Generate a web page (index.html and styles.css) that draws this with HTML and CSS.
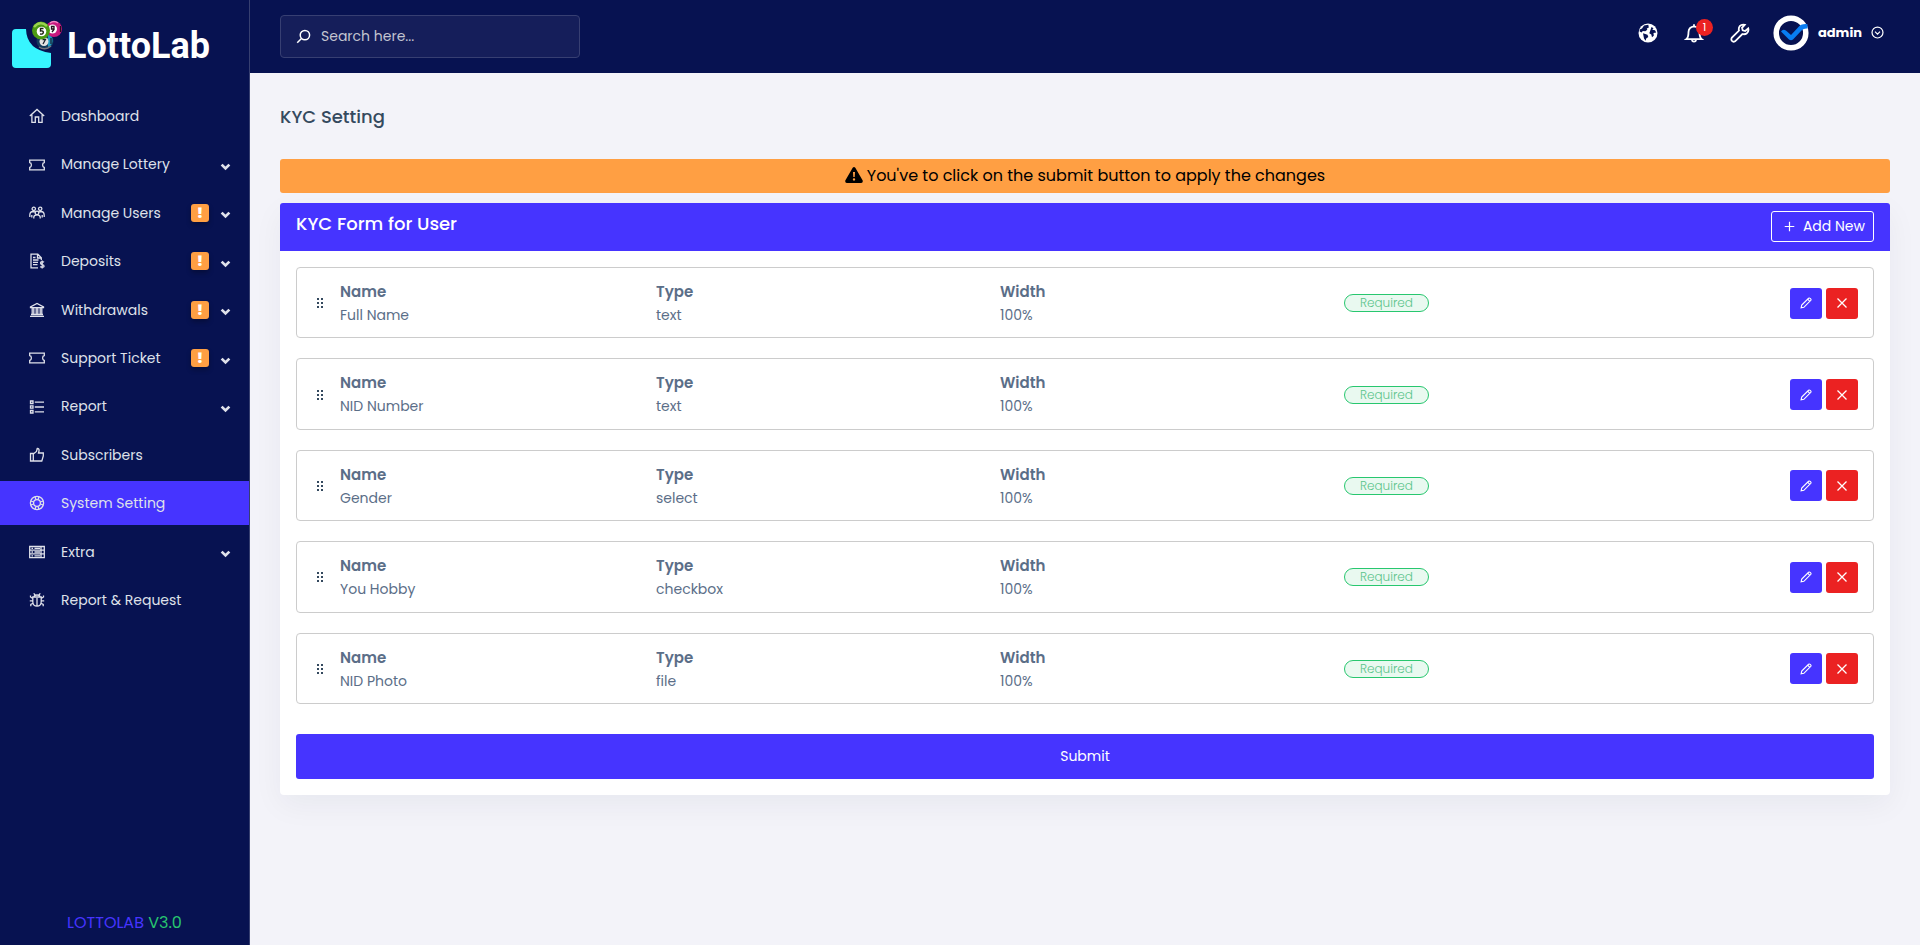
FILE: index.html
```html
<!DOCTYPE html>
<html lang="en">
<head>
<meta charset="utf-8">
<meta name="viewport" content="width=device-width, initial-scale=1">
<title>LottoLab - KYC Setting</title>
<link rel="stylesheet" href="styles.css">
</head>
<body>
<svg class="sprite" aria-hidden="true">
  <symbol id="i-home" viewBox="0 0 16 16"><path d="M.8 8 8 1.4 15.200 8M2.900 6.800V14.300H6.300V9H9.700V14.300H13.100V6.800"/></symbol>
  <symbol id="i-ticket" viewBox="0 0 16 16"><path d="M.7 3.200H15.300V5.500Q13.600 5.900 13.600 8T15.300 10.500V12.800H.7V10.500Q2.400 10.100 2.400 8T.7 5.500Z"/></symbol>
  <symbol id="i-users" viewBox="0 0 16 16"><circle cx="4.800" cy="3.800" r="1.700"/><circle cx="11.200" cy="3.800" r="1.700"/><circle cx="8" cy="7.900" r="1.800"/><path d="M4.800 13.500V12Q5 9.900 8 9.900T11.200 12V13.500M.8 12V10Q1 6.500 4 6.500L6 7M15.200 12V10Q15 6.500 12 6.500L10 7M2.800 12.500V10M13.200 12.500V10"/></symbol>
  <symbol id="i-invoice" viewBox="0 0 16 16"><path d="M9 14.800H2V1.200H8.800L12.300 4.700V7M8.500 1.200V5H12.300M4 4.500H6.500M4 7H9.500M4 9.300H9M4 11.600H8.500M15 9.300Q14.300 8.600 13.200 8.600 11.500 8.700 11.500 10T13.200 11.500 15 13T13.200 14.300Q12 14.300 11.300 13.500M13.200 7.600V15.400"/></symbol>
  <symbol id="i-bank" viewBox="0 0 16 16"><path d="M1.500 5.600V4.800L8 1.500 14.500 4.800V5.600ZM3.200 6V12.300M4.800 6V12.300M7.200 6V12.300M8.800 6V12.300M11.200 6V12.300M12.800 6V12.300M2 12.500H14M1 14.400H15"/></symbol>
  <symbol id="i-list" viewBox="0 0 16 16"><path d="M1.500 2H4V4.500H1.500ZM1.500 6.800H4V9.200H1.500ZM1.500 11.500H4V14H1.500ZM5.800 3.200H15M5.800 8H15M5.800 12.800H15"/></symbol>
  <symbol id="i-thumb" viewBox="0 0 16 16"><path d="M1.500 6.500H4.300V14H1.500ZM4.300 7 7.500 4.500 8.200 1.500Q10.500 1.300 10 4L9.500 6H14.300V9L12.800 14H4.300"/></symbol>
  <symbol id="i-ring" viewBox="0 0 16 16"><circle cx="8" cy="8" r="6.600"/><circle cx="8" cy="8" r="3.400"/><path d="M6 1.800 7 4.600M10 1.800 9 4.600M6 14.200 7 11.400M10 14.200 9 11.400M1.800 6 4.600 7M1.800 10 4.600 9M14.200 6 11.400 7M14.200 10 11.400 9"/></symbol>
  <symbol id="i-grid" viewBox="0 0 16 16"><path d="M.7 2.500H15.300V13.700H.7ZM.7 6.200H15.300M.7 9.900H15.300M2.500 4.400H4M5.500 4.400H11M2.500 8H4M5.500 8H11M2.500 11.800H4M5.500 11.800H11M12 2.500V13.700"/></symbol>
  <symbol id="i-bug" viewBox="0 0 16 16"><path d="M3.800 5H12.200V10Q12 14.200 8 14.200T3.800 10ZM5 5Q5.200 3 8 3T11 5M4.800 1.200 6 3.300M11.200 1.200 10 3.300M8 6V14M3.800 6.500 1.500 5V3.500M12.200 6.500 14.500 5V3.500M.8 8.800H3.800M12.200 8.800H15.200M4 11.300 1.800 12.500V14.300M12 11.300 14.200 12.500V14.300"/></symbol>
  <symbol id="i-chevron" viewBox="0 0 10 10"><path d="M1.500 3.300 5 6.700 8.500 3.300"/></symbol>
  <symbol id="i-search" viewBox="0 0 16 16"><circle cx="9.500" cy="6.500" r="5"/><path d="M5.800 10.200 1.300 14.700"/></symbol>
  <symbol id="i-globe" viewBox="0 0 20 20"><circle cx="10" cy="10" r="9.500" fill="currentColor" stroke="none"/><path d="M6 2.500 10.300 1.800 10.800 4.500 8.800 5.600 9.300 6.800 7.300 8.300 4.800 8 3.500 9.600 1.700 8.500 1.800 6.500 4 5.500ZM13.500 4 15.500 5.300 14.300 6.800 17 7.200 18.200 9.500 15.500 10 15.800 12.800 14 14.300 13.300 11.500 11.300 10.300 12.200 7.800ZM5 10.300 9.500 11.700 10.300 14 8.200 15.400 7.700 17.800 6 15.500Z" class="globe-land"/></symbol>
  <symbol id="i-bell" viewBox="0 0 20 20"><path d="M2.300 16.200Q4.500 14.500 4.500 9 4.700 4 10 3.300 15.300 4 15.500 9 15.500 14.500 17.700 16.200ZM10 1.200V3.300M8 16.500Q8 18.600 10 18.600T12 16.500"/></symbol>
  <symbol id="i-wrench" viewBox="0 0 20 20"><path d="M18.200 5.400 15.200 8 12.700 7.300 12 4.800 14.800 1.800Q11.800.9 9.700 3.200 8.300 5 9 7.600L1.700 14.900Q.8 16.700 2 18T5.100 18.300L12.400 11Q15 11.700 16.900 10.200 19.100 8 18.200 5.400Z"/></symbol>
  <symbol id="i-circle-down" viewBox="0 0 14 14"><circle cx="7" cy="7" r="5.900"/><path d="M4.300 6 7 8.700 9.700 6"/></symbol>
  <symbol id="i-warning" viewBox="0 0 18 16"><path d="M7.700.8Q9-.7 10.300.8L17.700 13.500Q18.200 15.800 16.200 16H1.800Q-.2 15.800.3 13.500ZM8 5 8.300 10H9.700L10 5ZM9 11.200A1.200 1.200 0 1 0 9 13.600 1.200 1.200 0 1 0 9 11.200Z" fill="currentColor" fill-rule="evenodd" stroke="none"/></symbol>
  <symbol id="i-plus" viewBox="0 0 12 12"><path d="M6 .8V11.200M.8 6H11.200"/></symbol>
  <symbol id="i-grip" viewBox="0 0 8 12"><path d="M1 1H3V3H1ZM5 1H7V3H5ZM1 5H3V7H1ZM5 5H7V7H5ZM1 9H3V11H1ZM5 9H7V11H5Z" fill="currentColor" stroke="none"/></symbol>
  <symbol id="i-pen" viewBox="0 0 14 14"><path d="M1.300 12.700 2 9.500 10 1.500Q11 .8 12.200 1.900T12.500 4L4.500 12ZM8.900 2.600 11.400 5.100"/></symbol>
  <symbol id="i-times" viewBox="0 0 12 12"><path d="M1.500 1.500 10.500 10.500M10.500 1.500 1.500 10.500"/></symbol>
</svg>

<div class="layout">
  <aside class="sidebar">
    <a class="logo" href="#">
      <svg class="logo-mark" viewBox="0 0 52 50" aria-hidden="true">
        <path d="M4 10H14Q14.500 31 39 34V45Q39 49 35 49H4Q0 49 0 45V14Q0 10 4 10Z" fill="#37f5ff"/>
        <circle cx="33" cy="22" r="8.500" fill="#123a5c"/><path d="M36 15Q41 17 40.500 22T36 28Z" fill="#1d9cc4"/><circle cx="32" cy="22.500" r="4.500" fill="#e4e4e4"/><path d="M27 28Q33 32 39 27" fill="none" stroke="#77757c" stroke-width="1.500"/><path d="M30.500 20.500H33.500L31 25M39 19V25" fill="none" stroke="#1c2330" stroke-width="1.300"/>
        <circle cx="42" cy="10" r="8" fill="#c9187f"/><path d="M38 4Q42 1 46 4" fill="none" stroke="#f08bc5" stroke-width="1.500"/><circle cx="40.500" cy="10" r="4.500" fill="#fff"/><path d="M42 10H39.500V7.500H42V10.500L40 13M48.500 7V13" fill="none" stroke="#26121d" stroke-width="1.300"/>
        <circle cx="29" cy="11.500" r="9" fill="#4b9a12"/><path d="M22 8Q28 1 35 7" fill="none" stroke="#9bd44f" stroke-width="2.500"/><circle cx="29.500" cy="12.500" r="4.800" fill="#fff"/><path d="M31.500 9.500H28.500V12Q31.500 11.500 31.300 13.500T28 15" fill="none" stroke="#1a2312" stroke-width="1.400"/>
      </svg>
      <span class="logo-text">LottoLab</span>
    </a>
    <nav>
      <ul class="menu">
        <li><a class="menu-link" href="#"><svg class="icon"><use href="#i-home"/></svg><span class="menu-title">Dashboard</span></a></li>
        <li><a class="menu-link" href="#"><svg class="icon"><use href="#i-ticket"/></svg><span class="menu-title">Manage Lottery</span><svg class="chevron"><use href="#i-chevron"/></svg></a></li>
        <li><a class="menu-link" href="#"><svg class="icon"><use href="#i-users"/></svg><span class="menu-title">Manage Users</span><span class="alert-mark">!</span><svg class="chevron"><use href="#i-chevron"/></svg></a></li>
        <li><a class="menu-link" href="#"><svg class="icon"><use href="#i-invoice"/></svg><span class="menu-title">Deposits</span><span class="alert-mark">!</span><svg class="chevron"><use href="#i-chevron"/></svg></a></li>
        <li><a class="menu-link" href="#"><svg class="icon"><use href="#i-bank"/></svg><span class="menu-title">Withdrawals</span><span class="alert-mark">!</span><svg class="chevron"><use href="#i-chevron"/></svg></a></li>
        <li><a class="menu-link" href="#"><svg class="icon"><use href="#i-ticket"/></svg><span class="menu-title">Support Ticket</span><span class="alert-mark">!</span><svg class="chevron"><use href="#i-chevron"/></svg></a></li>
        <li><a class="menu-link" href="#"><svg class="icon"><use href="#i-list"/></svg><span class="menu-title">Report</span><svg class="chevron"><use href="#i-chevron"/></svg></a></li>
        <li><a class="menu-link" href="#"><svg class="icon"><use href="#i-thumb"/></svg><span class="menu-title">Subscribers</span></a></li>
        <li><a class="menu-link active" href="#" aria-current="page"><svg class="icon"><use href="#i-ring"/></svg><span class="menu-title">System Setting</span></a></li>
        <li><a class="menu-link" href="#"><svg class="icon"><use href="#i-grid"/></svg><span class="menu-title">Extra</span><svg class="chevron"><use href="#i-chevron"/></svg></a></li>
        <li><a class="menu-link" href="#"><svg class="icon"><use href="#i-bug"/></svg><span class="menu-title">Report &amp; Request</span></a></li>
      </ul>
    </nav>
    <p class="version"><span class="version-name">LOTTOLAB</span> <span class="version-number">V3.0</span></p>
  </aside>

  <div class="page">
    <header class="topbar">
      <label class="search">
        <svg class="search-icon" aria-hidden="true"><use href="#i-search"/></svg>
        <input class="search-input" type="search" placeholder="Search here..." aria-label="Search here">
      </label>
      <div class="tools">
        <button class="tool" type="button" aria-label="Visit website"><svg class="tool-icon"><use href="#i-globe"/></svg></button>
        <button class="tool" type="button" aria-label="Notifications"><svg class="tool-icon"><use href="#i-bell"/></svg><span class="count">1</span></button>
        <button class="tool" type="button" aria-label="System setting"><svg class="tool-icon"><use href="#i-wrench"/></svg></button>
        <button class="profile" type="button">
          <svg class="avatar" viewBox="0 0 36 36" aria-hidden="true"><circle cx="18" cy="18" r="14.800" fill="none" stroke="#fff" stroke-width="5.500"/><path d="M8 16.500Q10 13.500 13.500 16L18 20 25 12.500Q28 8.500 34.500 9.200V13.500Q31 13 28.500 15.500L20 24.500Q18 26 16 24.500Z" fill="#087df2"/></svg>
          <span class="profile-name">admin</span>
          <svg class="profile-caret"><use href="#i-circle-down"/></svg>
        </button>
      </div>
    </header>

    <main class="content">
      <h1 class="page-title">KYC Setting</h1>
      <p class="notice"><svg class="notice-icon" aria-hidden="true"><use href="#i-warning"/></svg>You've to click on the submit button to apply the changes</p>
      <form class="card">
        <div class="card-header">
          <h2 class="card-title">KYC Form for User</h2>
          <button class="add-button" type="button"><svg class="add-icon"><use href="#i-plus"/></svg>Add New</button>
        </div>
        <div class="card-body">
          <ul class="fields">
            <li class="field">
              <svg class="grip"><use href="#i-grip"/></svg>
              <div class="cell"><strong class="cell-label">Name</strong><span>Full Name</span></div>
              <div class="cell"><strong class="cell-label">Type</strong><span>text</span></div>
              <div class="cell"><strong class="cell-label">Width</strong><span>100%</span></div>
              <div class="field-end"><span class="badge">Required</span><div class="actions"><button class="action edit" type="button" aria-label="Edit Full Name"><svg class="action-icon"><use href="#i-pen"/></svg></button><button class="action remove" type="button" aria-label="Remove Full Name"><svg class="action-icon"><use href="#i-times"/></svg></button></div></div>
            </li>
            <li class="field">
              <svg class="grip"><use href="#i-grip"/></svg>
              <div class="cell"><strong class="cell-label">Name</strong><span>NID Number</span></div>
              <div class="cell"><strong class="cell-label">Type</strong><span>text</span></div>
              <div class="cell"><strong class="cell-label">Width</strong><span>100%</span></div>
              <div class="field-end"><span class="badge">Required</span><div class="actions"><button class="action edit" type="button" aria-label="Edit NID Number"><svg class="action-icon"><use href="#i-pen"/></svg></button><button class="action remove" type="button" aria-label="Remove NID Number"><svg class="action-icon"><use href="#i-times"/></svg></button></div></div>
            </li>
            <li class="field">
              <svg class="grip"><use href="#i-grip"/></svg>
              <div class="cell"><strong class="cell-label">Name</strong><span>Gender</span></div>
              <div class="cell"><strong class="cell-label">Type</strong><span>select</span></div>
              <div class="cell"><strong class="cell-label">Width</strong><span>100%</span></div>
              <div class="field-end"><span class="badge">Required</span><div class="actions"><button class="action edit" type="button" aria-label="Edit Gender"><svg class="action-icon"><use href="#i-pen"/></svg></button><button class="action remove" type="button" aria-label="Remove Gender"><svg class="action-icon"><use href="#i-times"/></svg></button></div></div>
            </li>
            <li class="field">
              <svg class="grip"><use href="#i-grip"/></svg>
              <div class="cell"><strong class="cell-label">Name</strong><span>You Hobby</span></div>
              <div class="cell"><strong class="cell-label">Type</strong><span>checkbox</span></div>
              <div class="cell"><strong class="cell-label">Width</strong><span>100%</span></div>
              <div class="field-end"><span class="badge">Required</span><div class="actions"><button class="action edit" type="button" aria-label="Edit You Hobby"><svg class="action-icon"><use href="#i-pen"/></svg></button><button class="action remove" type="button" aria-label="Remove You Hobby"><svg class="action-icon"><use href="#i-times"/></svg></button></div></div>
            </li>
            <li class="field">
              <svg class="grip"><use href="#i-grip"/></svg>
              <div class="cell"><strong class="cell-label">Name</strong><span>NID Photo</span></div>
              <div class="cell"><strong class="cell-label">Type</strong><span>file</span></div>
              <div class="cell"><strong class="cell-label">Width</strong><span>100%</span></div>
              <div class="field-end"><span class="badge">Required</span><div class="actions"><button class="action edit" type="button" aria-label="Edit NID Photo"><svg class="action-icon"><use href="#i-pen"/></svg></button><button class="action remove" type="button" aria-label="Remove NID Photo"><svg class="action-icon"><use href="#i-times"/></svg></button></div></div>
            </li>
          </ul>
          <button class="submit" type="submit">Submit</button>
        </div>
      </form>
    </main>
  </div>
</div>
</body>
</html>
```

FILE: styles.css
```css
:root {
  --navy: #071251;
  --primary: #4634ff;
  --orange: #ff9f43;
  --red: #eb2222;
  --green: #28c76f;
  --text: #5b6e88;
}

* { box-sizing: border-box; }

body {
  margin: 0;
  background: #f3f3f9;
  color: var(--text);
  font-family: Poppins, Inter, sans-serif;
  font-size: 14px;
}

h1, h2, p, ul { margin: 0; padding: 0; }
ul { list-style: none; }
a { color: inherit; text-decoration: none; }
button, input { font: inherit; color: inherit; }
button { border: 0; background: none; padding: 0; cursor: pointer; }

.sprite { position: absolute; width: 0; height: 0; }
svg { flex: none; fill: none; stroke: currentColor; stroke-width: 1.300; }
.globe-land { fill: var(--navy); stroke: none; }

.layout {
  display: grid;
  grid-template-columns: 250px minmax(0, 1fr);
  min-height: 100vh;
}

/* Sidebar */
.sidebar {
  display: flex;
  flex-direction: column;
  background: var(--navy);
  border-right: 1px solid #363f70;
  color: #dfe1ea;
}
.logo {
  display: flex;
  align-items: center;
  gap: 3px;
  height: 94px;
  padding: 0 0 6px 12px;
}
.logo-mark { width: 52px; height: 50px; stroke: none; }
.logo-text {
  padding-top: 4px;
  color: #fff;
  font-family: Roboto, sans-serif;
  font-size: 36px;
  font-weight: 700;
}
.menu { display: grid; gap: 5px; }
.menu-link {
  display: flex;
  align-items: center;
  padding: 11px 18px 10px 29px;
  font-size: 14px;
  line-height: 1.6;
}
.menu-link.active { background: var(--primary); }
.icon { width: 16px; height: 16px; margin-right: 16px; }
.menu-title { flex: 1; }
.alert-mark {
  width: 18px;
  height: 18px;
  margin-right: 11px;
  border-radius: 3px;
  background: var(--orange);
  color: #fff;
  font-weight: 900;
  line-height: 18px;
  text-align: center;
  box-shadow: 0 3px 5px #0004;
}
.chevron { width: 11px; height: 11px; margin-top: 4px; stroke-width: 2.500; }
.version { margin-top: auto; padding: 0 0 12px; text-align: center; font-size: 16px; line-height: 20px; }
.version-name { color: var(--primary); }
.version-number { color: var(--green); }

/* Top bar */
.topbar {
  display: flex;
  align-items: center;
  justify-content: space-between;
  height: 73px;
  padding: 0 36px 0 30px;
  background: var(--navy);
  color: #fff;
}
.search {
  display: flex;
  align-items: center;
  gap: 10px;
  width: 300px;
  height: 43px;
  padding: 0 15px;
  border: 1px solid #373f72;
  border-radius: 4px;
  background: #151e5a;
}
.search-icon { width: 15px; height: 15px; stroke-width: 1.600; }
.search-input { flex: 1; min-width: 0; border: 0; outline: 0; padding: 0; background: none; font-size: 14px; }
.search-input::placeholder { color: #c3c5d1; opacity: 1; }
.tools { display: flex; align-items: center; padding-bottom: 8px; }
.tool { position: relative; display: flex; }
.tool + .tool { margin-left: 26px; }
.tool-icon { width: 20px; height: 20px; stroke-width: 1.800; }
.count {
  position: absolute;
  top: -4px;
  right: -9px;
  width: 17px;
  height: 17px;
  border-radius: 50%;
  background: var(--red);
  font-size: 11px;
  line-height: 17px;
  text-align: center;
}
.profile { display: flex; align-items: center; gap: 9px; margin-left: 23px; }
.avatar { width: 36px; height: 36px; stroke: none; }
.profile-name { font-size: 13px; font-weight: 700; }
.profile-caret { width: 13px; height: 13px; }

/* Content */
.content { padding: 30px; }
.page-title { margin-bottom: 28px; color: #34495e; font-size: 18px; font-weight: 500; line-height: 28px; }
.notice {
  display: flex;
  align-items: center;
  justify-content: center;
  gap: 4px;
  height: 34px;
  margin-bottom: 10px;
  padding-bottom: 2px;
  border-radius: 3px;
  background: var(--orange);
  color: #000;
  font-size: 16px;
}
.notice-icon { width: 18px; height: 16px; }
.card { border-radius: 4px; background: #fff; box-shadow: 0 10px 30px #12263f0d; }
.card-header {
  display: flex;
  align-items: flex-start;
  justify-content: space-between;
  height: 48px;
  padding: 8px 16px;
  border-radius: 3px 3px 0 0;
  background: var(--primary);
  color: #fff;
}
.card-title { font-size: 18px; font-weight: 500; line-height: 26px; }
.add-button {
  display: flex;
  align-items: center;
  gap: 8px;
  height: 31px;
  padding: 0 8px 0 12px;
  border: 1px solid #fff;
  border-radius: 3px;
  font-size: 14px;
}
.add-icon { width: 11px; height: 11px; }
.card-body { padding: 16px; }
.fields { display: grid; gap: 20px; margin-bottom: 30px; }
.field {
  display: grid;
  grid-template-columns: 24px 316fr 344fr 344fr 514fr;
  align-items: center;
  padding: 12px 15px 11px 19px;
  border: 1px solid #ccc;
  border-radius: 4px;
}
.grip { width: 8px; height: 12px; color: #34495e; }
.cell { display: grid; line-height: 1.6; }
.cell-label { font-size: 15px; font-weight: 600; }
.field-end { display: flex; align-items: center; justify-content: space-between; }
.badge {
  padding: 0 15px;
  border: 1px solid var(--green);
  border-radius: 9px;
  background: #e9f9f0;
  color: #5cc48b;
  font-size: 12px;
  font-weight: 300;
  line-height: 16px;
}
.actions { display: flex; gap: 4px; }
.action {
  display: grid;
  place-items: center;
  width: 32px;
  height: 31px;
  border-radius: 3px;
  color: #fff;
}
.edit { background: var(--primary); }
.remove { background: var(--red); }
.action-icon { width: 12px; height: 12px; }
.submit {
  width: 100%;
  height: 45px;
  border-radius: 3px;
  background: var(--primary);
  color: #fff;
  font-size: 14px;
}
```
